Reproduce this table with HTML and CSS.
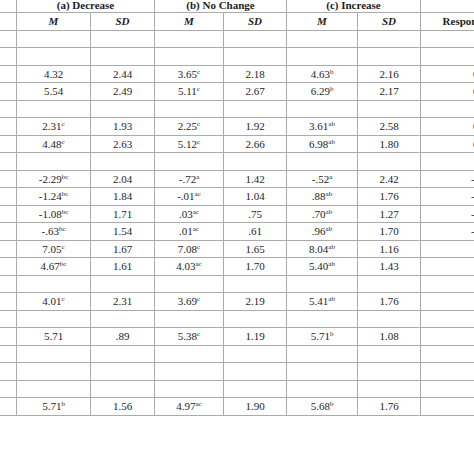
FILE: index.html
```html
<!DOCTYPE html>
<html>
<head>
<meta charset="utf-8">
<link rel="stylesheet" href="styles.css">
</head>
<body>
<div class="tbl">
  <div class="c top"></div><div class="c top span2 grp">(a) Decrease</div><div class="c top span2 grp">(b) No Change</div><div class="c top span2 grp">(c) Increase</div><div class="c top"></div>

  <div class="c"></div><div class="c hd"><i>M</i></div><div class="c hd"><i>SD</i></div><div class="c hd"><i>M</i></div><div class="c hd"><i>SD</i></div><div class="c hd"><i>M</i></div><div class="c hd"><i>SD</i></div><div class="c hd resp">Response change</div>

  <div class="c"></div><div class="c"></div><div class="c"></div><div class="c"></div><div class="c"></div><div class="c"></div><div class="c"></div><div class="c"></div>
  <div class="c"></div><div class="c"></div><div class="c"></div><div class="c"></div><div class="c"></div><div class="c"></div><div class="c"></div><div class="c"></div>

  <div class="c"></div><div class="c">4.32</div><div class="c">2.44</div><div class="c">3.65<sup>c</sup></div><div class="c">2.18</div><div class="c">4.63<sup>b</sup></div><div class="c">2.16</div><div class="c">0.31</div>
  <div class="c"></div><div class="c">5.54</div><div class="c">2.49</div><div class="c">5.11<sup>c</sup></div><div class="c">2.67</div><div class="c">6.29<sup>b</sup></div><div class="c">2.17</div><div class="c">0.36</div>

  <div class="c"></div><div class="c"></div><div class="c"></div><div class="c"></div><div class="c"></div><div class="c"></div><div class="c"></div><div class="c"></div>

  <div class="c"></div><div class="c">2.31<sup>c</sup></div><div class="c">1.93</div><div class="c">2.25<sup>c</sup></div><div class="c">1.92</div><div class="c">3.61<sup>ab</sup></div><div class="c">2.58</div><div class="c">0.28</div>
  <div class="c"></div><div class="c">4.48<sup>c</sup></div><div class="c">2.63</div><div class="c">5.12<sup>c</sup></div><div class="c">2.66</div><div class="c">6.98<sup>ab</sup></div><div class="c">1.80</div><div class="c">0.42</div>

  <div class="c"></div><div class="c"></div><div class="c"></div><div class="c"></div><div class="c"></div><div class="c"></div><div class="c"></div><div class="c"></div>

  <div class="c"></div><div class="c">-2.29<sup>bc</sup></div><div class="c">2.04</div><div class="c">-.72<sup>a</sup></div><div class="c">1.42</div><div class="c">-.52<sup>a</sup></div><div class="c">2.42</div><div class="c">-0.34</div>
  <div class="c"></div><div class="c">-1.24<sup>bc</sup></div><div class="c">1.84</div><div class="c">-.01<sup>ac</sup></div><div class="c">1.04</div><div class="c">.88<sup>ab</sup></div><div class="c">1.76</div><div class="c">-0.38</div>
  <div class="c"></div><div class="c">-1.08<sup>bc</sup></div><div class="c">1.71</div><div class="c">.03<sup>ac</sup></div><div class="c">.75</div><div class="c">.70<sup>ab</sup></div><div class="c">1.27</div><div class="c">-0.41</div>
  <div class="c"></div><div class="c">-.63<sup>bc</sup></div><div class="c">1.54</div><div class="c">.01<sup>ac</sup></div><div class="c">.61</div><div class="c">.96<sup>ab</sup></div><div class="c">1.70</div><div class="c">-0.29</div>
  <div class="c"></div><div class="c">7.05<sup>c</sup></div><div class="c">1.67</div><div class="c">7.08<sup>c</sup></div><div class="c">1.65</div><div class="c">8.04<sup>ab</sup></div><div class="c">1.16</div><div class="c">.33</div>
  <div class="c"></div><div class="c">4.67<sup>bc</sup></div><div class="c">1.61</div><div class="c">4.03<sup>ac</sup></div><div class="c">1.70</div><div class="c">5.40<sup>ab</sup></div><div class="c">1.43</div><div class="c">.27</div>

  <div class="c"></div><div class="c"></div><div class="c"></div><div class="c"></div><div class="c"></div><div class="c"></div><div class="c"></div><div class="c"></div>

  <div class="c"></div><div class="c">4.01<sup>c</sup></div><div class="c">2.31</div><div class="c">3.69<sup>c</sup></div><div class="c">2.19</div><div class="c">5.41<sup>ab</sup></div><div class="c">1.76</div><div class="c">.31</div>

  <div class="c"></div><div class="c"></div><div class="c"></div><div class="c"></div><div class="c"></div><div class="c"></div><div class="c"></div><div class="c"></div>

  <div class="c"></div><div class="c">5.71</div><div class="c">.89</div><div class="c">5.38<sup>c</sup></div><div class="c">1.19</div><div class="c">5.71<sup>b</sup></div><div class="c">1.08</div><div class="c">.12</div>

  <div class="c"></div><div class="c"></div><div class="c"></div><div class="c"></div><div class="c"></div><div class="c"></div><div class="c"></div><div class="c"></div>
  <div class="c"></div><div class="c"></div><div class="c"></div><div class="c"></div><div class="c"></div><div class="c"></div><div class="c"></div><div class="c"></div>
  <div class="c"></div><div class="c"></div><div class="c"></div><div class="c"></div><div class="c"></div><div class="c"></div><div class="c"></div><div class="c"></div>

  <div class="c"></div><div class="c">5.71<sup>b</sup></div><div class="c">1.56</div><div class="c">4.97<sup>ac</sup></div><div class="c">1.90</div><div class="c">5.68<sup>b</sup></div><div class="c">1.76</div><div class="c">.18</div>
</div>
</body>
</html>
```
FILE: styles.css
```css
html, body {
  margin: 0;
  padding: 0;
  background: #ffffff;
  overflow: hidden;
}
body {
  width: 474px;
  height: 474px;
  font-family: "Liberation Serif", "Times New Roman", serif;
  font-size: 11px;
  color: #1e1e1e;
}
.tbl {
  display: grid;
  grid-template-columns: 17px 74px 64px 69px 63px 71px 63px 124px;
  grid-auto-rows: 17.5px;
  width: 545px;
  margin-top: -4.5px;
}
.c {
  box-sizing: border-box;
  border-right: 1px solid #ababab;
  border-bottom: 1px solid #ababab;
  display: block;
  text-align: center;
  line-height: 17px;
  white-space: nowrap;
  overflow: hidden;
}
.top {
  line-height: 19px;
}
.span2 {
  grid-column: span 2;
}
.grp {
  font-weight: bold;
}
.hd {
  font-weight: bold;
}
.hd i {
  font-style: italic;
}
sup {
  font-size: 7px;
  line-height: 0;
  vertical-align: 4px;
}
```
